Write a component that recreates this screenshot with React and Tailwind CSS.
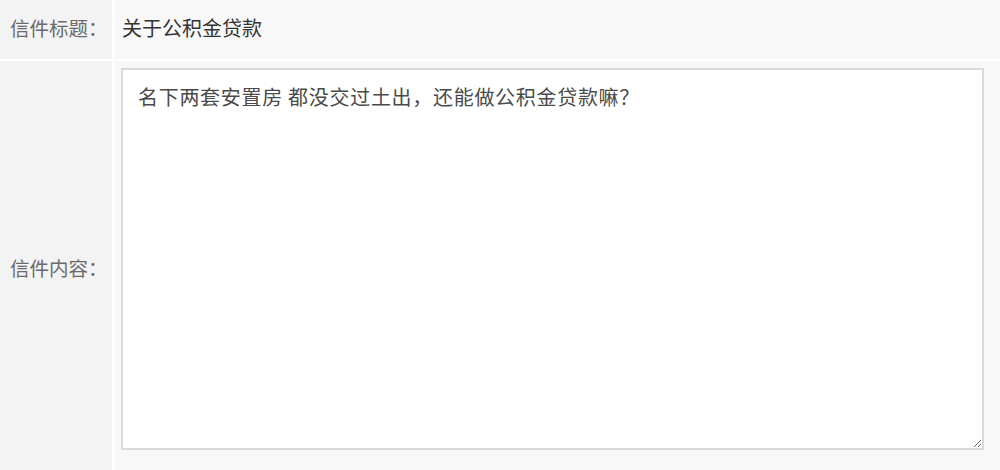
import React from 'react';

const cjk = { fontFamily: '"Noto Sans CJK SC", "Noto Sans", sans-serif' };

export default function App() {
  return (
    <div className="w-[1000px] h-[470px] bg-white overflow-hidden" style={cjk}>
      <div className="grid grid-cols-[112px_1fr] grid-rows-[59px_409px] gap-[2px] h-full">
        {/* title row */}
        <div className="bg-[#f3f3f3] flex items-center pl-[10px] pb-[4px] text-[19.5px] text-[#6a6a6a]">
          信件标题：
        </div>
        <div className="bg-[#f8f8f8] flex items-center pl-[8px] pb-[4px] text-[20px] text-[#333]">
          关于公积金贷款
        </div>

        {/* content row */}
        <div className="bg-[#f3f3f3] flex items-center pl-[10px] pt-[4px] text-[19.5px] text-[#6a6a6a]">
          信件内容：
        </div>
        <div className="bg-[#f8f8f8] pl-[7px] pr-[16px] pt-[7px] pb-[20px] flex">
          <textarea
            readOnly
            defaultValue="名下两套安置房 都没交过土出，还能做公积金贷款嘛？"
            className="w-full h-full bg-white border-2 border-[#dadada] px-[15px] pt-[12px] text-[20px] leading-[30px] tracking-[0.7px] text-[#4a4a4a] outline-none"
            style={{ fontFamily: '"Noto Sans CJK SC", serif' }}
          />
        </div>
      </div>
    </div>
  );
}
